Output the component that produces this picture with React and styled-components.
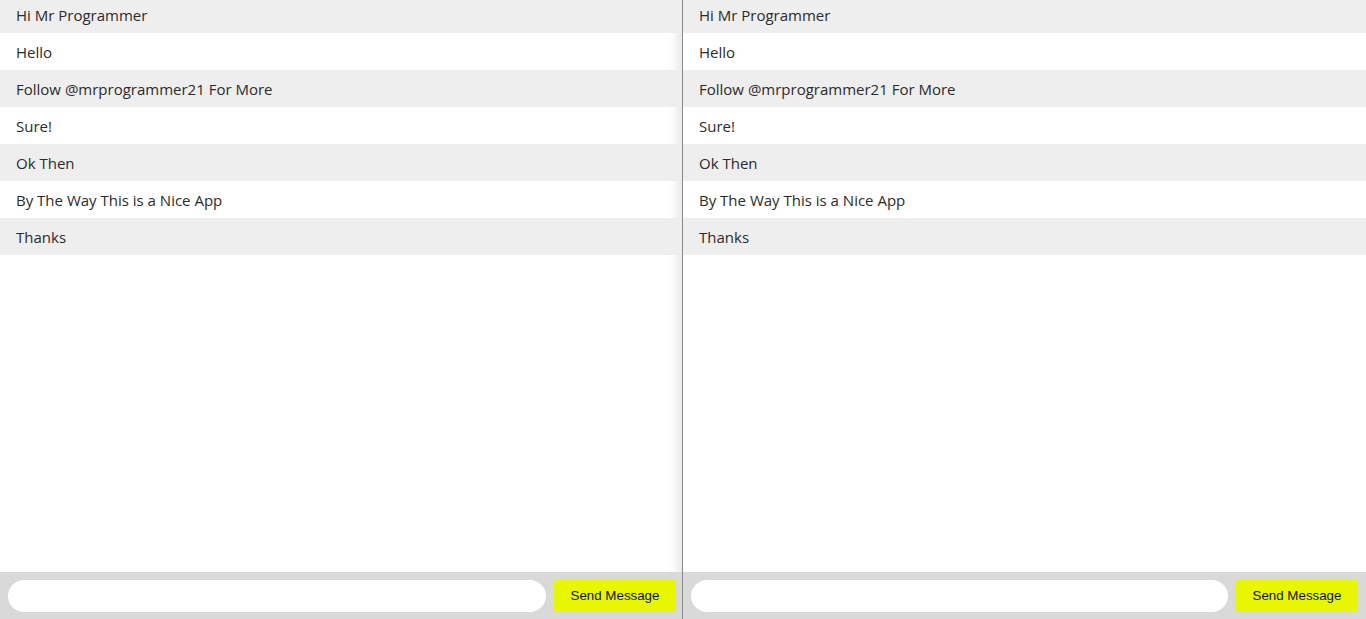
import React from 'react';
import styled, { createGlobalStyle } from 'styled-components';

const GlobalStyle = createGlobalStyle`
  html, body, #root {
    margin: 0;
    height: 100%;
  }
  body {
    font-family: "Open Sans", "Noto Sans", sans-serif;
    background: #fff;
  }
`;

const Screen = styled.div`
  display: flex;
  height: 100vh;
  width: 100%;
  overflow: hidden;
`;

const Pane = styled.section`
  box-sizing: border-box;
  width: 50%;
  display: flex;
  flex-direction: column;
  overflow: hidden;
  border-right: ${(p) => (p.divider ? '1px solid #8a8a8a' : 'none')};
  box-shadow: ${(p) => (p.divider ? 'inset -14px 0 14px -12px rgba(0, 0, 0, 0.14)' : 'none')};
`;

/* list is scrolled a few px, so the first row is cut at the top */
const MessageList = styled.ul`
  flex: 1;
  margin: -4px 0 0;
  padding: 0;
  list-style: none;
`;

const Message = styled.li`
  height: 37px;
  display: flex;
  align-items: center;
  padding-left: 16px;
  font-size: 15px;
  color: #2b2b2b;
  background: ${(p) => (p.shaded ? '#eeeeee' : 'transparent')};
`;

const Composer = styled.form`
  display: flex;
  align-items: center;
  gap: 8px;
  height: 47px;
  flex-shrink: 0;
  padding: 0 ${(p) => (p.divider ? '6px' : '8px')} 0 8px;
  background: #d9d9d9;
`;

const TextInput = styled.input`
  flex: 1;
  height: 32px;
  border: none;
  border-radius: 16px;
  background: #fff;
  padding: 0 14px;
  outline: none;
  font-family: "Open Sans", sans-serif;
`;

const SendButton = styled.button`
  width: 122px;
  height: 32px;
  border: none;
  border-radius: 3px;
  background: #e8f700;
  color: #111;
  font-family: "Liberation Sans", Arial, sans-serif;
  font-size: 13.33px;
  cursor: pointer;
`;

const messages = [
  'Hi Mr Programmer',
  'Hello',
  'Follow @mrprogrammer21 For More',
  'Sure!',
  'Ok Then',
  'By The Way This is a Nice App',
  'Thanks',
];

function ChatPane({ divider }) {
  return (
    <Pane divider={divider}>
      <MessageList>
        {messages.map((text, i) => (
          <Message key={i} shaded={i % 2 === 0}>
            {text}
          </Message>
        ))}
      </MessageList>
      <Composer divider={divider} onSubmit={(e) => e.preventDefault()}>
        <TextInput type="text" />
        <SendButton type="submit">Send Message</SendButton>
      </Composer>
    </Pane>
  );
}

export default function App() {
  return (
    <>
      <GlobalStyle />
      <Screen>
        <ChatPane divider />
        <ChatPane />
      </Screen>
    </>
  );
}
